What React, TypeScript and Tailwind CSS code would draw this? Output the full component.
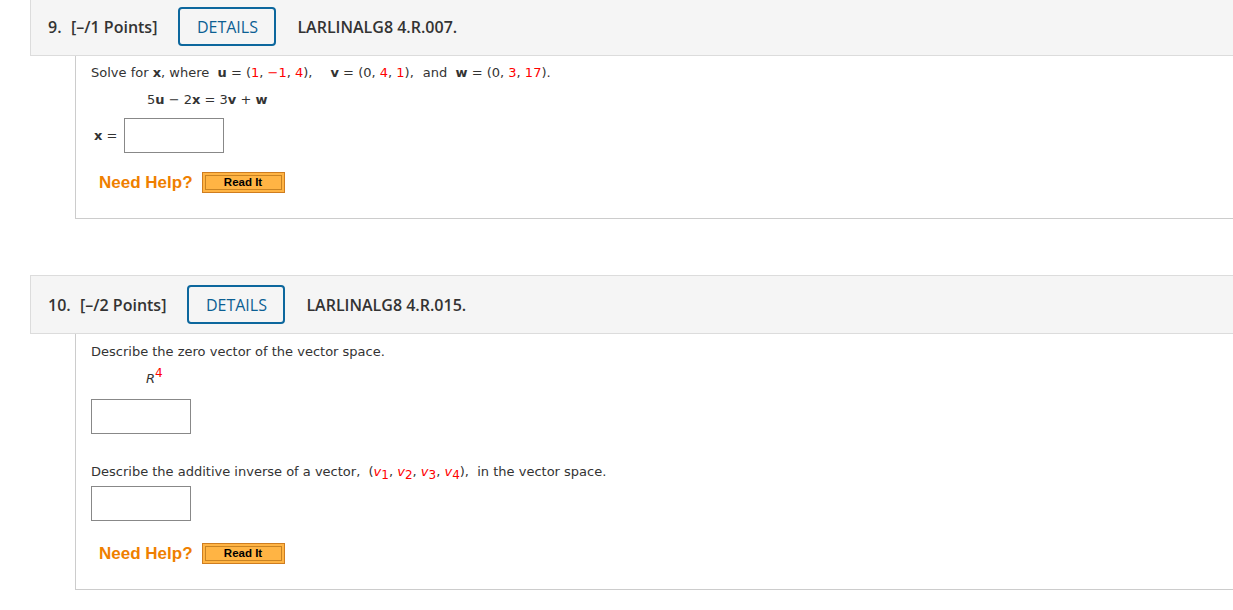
import React from "react";

const R = ({ children }: { children: React.ReactNode }) => (
  <span className="text-[#ff0000]">{children}</span>
);

function Header({ num, pts, code, numW }: { num: string; pts: string; code: string; numW: string }) {
  return (
    <div
      className="ml-[30px] h-[59px] flex items-center border-t border-b border-l border-[#dcdcdc] bg-[#f5f5f5] pl-[17px] text-[16px] text-[#333]"
      style={{ fontFamily: '"Open Sans", sans-serif' }}
    >
      <span className={`font-semibold ${numW}`}>{num}</span>
      <span className="font-semibold">{pts}</span>
      <div className="ml-[21px] flex h-[39px] w-[98px] items-center justify-center rounded-[4px] border-2 border-[#0c679d] text-[#0c5f93]">
        DETAILS
      </div>
      <span className="ml-[21px] font-semibold">{code}</span>
    </div>
  );
}

function NeedHelp() {
  return (
    <div className="flex items-center">
      <span
        className="text-[17px] font-bold text-[#ef7f00]"
        style={{ fontFamily: '"Liberation Sans", Arial, sans-serif' }}
      >
        Need Help?
      </span>
      <div className="ml-[9px] h-[21px] w-[83px] border border-[#cf7d1f] bg-[#ffb444] p-[2px]">
        <div
          className="flex h-full w-full items-center justify-center border border-[#c98322] text-[11.5px] font-bold text-black"
          style={{ fontFamily: '"Liberation Sans", Arial, sans-serif' }}
        >
          Read It
        </div>
      </div>
    </div>
  );
}

const Box = () => <div className="h-[35px] w-[100px] border border-[#888]" />;

export default function App() {
  return (
    <div className="min-h-[610px] w-[1233px] overflow-hidden bg-white">
      <div className="-mt-[3px]">
        <Header num="9." pts="[–/1 Points]" code="LARLINALG8 4.R.007." numW="w-[23px]" />
      </div>
      <div
        className="ml-[75px] h-[163px] border-b border-l border-[#cccccc] pl-[15px] text-[13px] text-[#333]"
        style={{ fontFamily: '"DejaVu Sans", Verdana, sans-serif' }}
      >
        <div className="pt-[8px] leading-[18px] whitespace-nowrap">
          Solve for <b>x</b>, where&nbsp; <b>u</b> = (<R>1</R>, <R>−1</R>, <R>4</R>),<span className="inline-block w-[18px]" /><b>v</b> = (0, <R>4</R>, <R>1</R>),<span className="inline-block w-[9px]" />and&nbsp; <b>w</b> = (0, <R>3</R>, <R>17</R>).
        </div>
        <div className="mt-[9px] pl-[56px] leading-[18px]">
          5<b>u</b> − 2<b>x</b> = 3<b>v</b> + <b>w</b>
        </div>
        <div className="mt-[9px] flex items-center pl-[3px]">
          <span className="mr-[7px]">
            <b>x</b> =
          </span>
          <Box />
        </div>
        <div className="mt-[17px] pl-[8px]">
          <NeedHelp />
        </div>
      </div>

      <div className="mt-[56px]">
        <Header num="10." pts="[–/2 Points]" code="LARLINALG8 4.R.015." numW="w-[32px]" />
      </div>
      <div
        className="ml-[75px] h-[256px] border-b border-l border-[#cccccc] pl-[15px] text-[13px] text-[#333]"
        style={{ fontFamily: '"DejaVu Sans", Verdana, sans-serif' }}
      >
        <div className="pt-[9px] leading-[18px]">Describe the zero vector of the vector space.</div>
        <div className="mt-[9px] pl-[55px] leading-[18px]">
          <i>R</i>
          <sup className="text-[#ff0000] text-[12px]">4</sup>
        </div>
        <div className="mt-[11px]">
          <Box />
        </div>
        <div className="mt-[29px] leading-[18px]">
          Describe the additive inverse of a vector,&nbsp; (<R><i>v</i><sub className="text-[12px]">1</sub></R>, <R><i>v</i><sub className="text-[12px]">2</sub></R>, <R><i>v</i><sub className="text-[12px]">3</sub></R>, <R><i>v</i><sub className="text-[12px]">4</sub></R>),&nbsp; in the vector space.
        </div>
        <div className="mt-[5px]">
          <Box />
        </div>
        <div className="mt-[20px] pl-[8px]">
          <NeedHelp />
        </div>
      </div>
    </div>
  );
}
